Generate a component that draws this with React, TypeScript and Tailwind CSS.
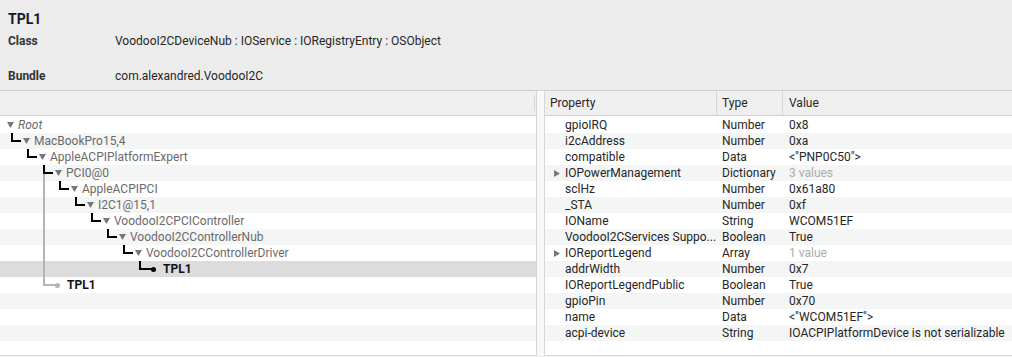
import React from "react";

type TreeRow = {
  label: string;
  depth: number;
  leaf?: boolean;
  italic?: boolean;
  bold?: boolean;
  selected?: boolean;
  guide?: boolean;
  guideBelow?: boolean;
  grayLink?: boolean;
};

const tree: TreeRow[] = [
  { label: "Root", depth: 0, italic: true },
  { label: "MacBookPro15,4", depth: 1 },
  { label: "AppleACPIPlatformExpert", depth: 2 },
  { label: "PCI0@0", depth: 3, guideBelow: true },
  { label: "AppleACPIPCI", depth: 4, guide: true },
  { label: "I2C1@15,1", depth: 5, guide: true },
  { label: "VoodooI2CPCIController", depth: 6, guide: true },
  { label: "VoodooI2CControllerNub", depth: 7, guide: true },
  { label: "VoodooI2CControllerDriver", depth: 8, guide: true },
  { label: "TPL1", depth: 9, leaf: true, bold: true, selected: true, guide: true },
  { label: "TPL1", depth: 3, leaf: true, bold: true, grayLink: true },
];

const props = [
  { name: "gpioIRQ", type: "Number", value: "0x8" },
  { name: "i2cAddress", type: "Number", value: "0xa" },
  { name: "compatible", type: "Data", value: '<"PNP0C50">' },
  { name: "IOPowerManagement", type: "Dictionary", value: "3 values", expand: true },
  { name: "sclHz", type: "Number", value: "0x61a80" },
  { name: "_STA", type: "Number", value: "0xf" },
  { name: "IOName", type: "String", value: "WCOM51EF" },
  { name: "VoodooI2CServices Suppo...", type: "Boolean", value: "True" },
  { name: "IOReportLegend", type: "Array", value: "1 value", expand: true },
  { name: "addrWidth", type: "Number", value: "0x7" },
  { name: "IOReportLegendPublic", type: "Boolean", value: "True" },
  { name: "gpioPin", type: "Number", value: "0x70" },
  { name: "name", type: "Data", value: '<"WCOM51EF">' },
  { name: "acpi-device", type: "String", value: "IOACPIPlatformDevice is not serializable" },
];

function DownTri() {
  return (
    <svg width="7" height="6" viewBox="0 0 7 6" className="shrink-0">
      <polygon points="0,0 7,0 3.5,6" fill="#777" />
    </svg>
  );
}

function RightTri() {
  return (
    <svg width="6" height="7" viewBox="0 0 6 7" className="shrink-0">
      <polygon points="0,0 6,3.5 0,7" fill="#777" />
    </svg>
  );
}

function TreeLine({ row, index }: { row: TreeRow; index: number }) {
  const bg = row.selected ? "bg-[#dcdcdc]" : index % 2 === 1 ? "bg-[#f4f5f5]" : "bg-white";
  const line = row.grayLink ? "border-[#b4b4b4]" : "border-black";
  return (
    <div className={`relative flex h-4 items-center ${bg}`}>
      {row.guide && <span className="absolute left-[43px] top-0 h-4 w-[2px] bg-[#b4b4b4]" />}
      {row.depth === 0 ? (
        <div className="ml-[7px] flex items-center">
          <DownTri />
        </div>
      ) : (
        <div className="flex h-4 items-start" style={{ paddingLeft: row.depth * 16 - 5 }}>
          <div className="flex h-4 flex-col">
            <div
              className={`h-[9px] border-b-2 border-l-2 ${line} ${row.leaf ? "w-[13px]" : "w-[10px]"}`}
            />
            {row.guideBelow && <div className="w-[2px] flex-1 bg-[#b4b4b4]" />}
          </div>
          {row.leaf ? (
            <span
              className={`mt-[6px] ml-[-1px] h-[5px] w-[5px] rounded-full ${row.grayLink ? "bg-[#b4b4b4]" : "bg-black"}`}
            />
          ) : (
            <div className="ml-[2px] flex h-4 items-center">
              <DownTri />
            </div>
          )}
        </div>
      )}
      <span
        className={`whitespace-nowrap ${row.leaf ? "ml-[7px]" : "ml-[4px]"} ${row.italic ? "italic" : ""} ${
          row.bold ? "font-bold text-[#111]" : "text-[#6a6a6a]"
        }`}
      >
        {row.label}
      </span>
    </div>
  );
}

export default function App() {
  const emptyTree = Array.from({ length: 5 }, (_, i) => tree.length + i);
  return (
    <div
      className="flex h-[357px] w-[1012px] flex-col overflow-hidden bg-[#ececec] text-[12px] leading-4 text-[#262626]"
      style={{ fontFamily: "Roboto, 'Liberation Sans', sans-serif" }}
    >
      {/* top info */}
      <div className="h-[91px] shrink-0 border-b border-[#cfcfcf] px-2">
        <div className="pt-[11px] text-[14px] font-bold leading-4 text-[#1a1a1a]">TPL1</div>
        <div className="mt-[6px] flex h-4 items-center">
          <span className="w-[107px] font-bold text-[#333]">Class</span>
          <span>VoodooI2CDeviceNub : IOService : IORegistryEntry : OSObject</span>
        </div>
        <div className="mt-[19px] flex h-4 items-center">
          <span className="w-[107px] font-bold text-[#333]">Bundle</span>
          <span>com.alexandred.VoodooI2C</span>
        </div>
      </div>

      {/* panes */}
      <div className="flex min-h-0 flex-1">
        {/* tree pane */}
        <div className="flex w-[537px] shrink-0 flex-col border-r border-[#d6d6d6] bg-white">
          <div className="flex h-[25px] shrink-0 justify-end border-b border-[#d0d0d0] bg-[#efefef]">
            <span className="my-[4px] mr-[1px] w-px bg-[#d4d4d4]" />
          </div>
          <div className="min-h-0 flex-1 overflow-hidden border-b border-[#dcdcdc] pt-px">
            {tree.map((row, i) => (
              <TreeLine key={i} row={row} index={i} />
            ))}
            {emptyTree.map((i) => (
              <div key={i} className={`h-4 ${i % 2 === 1 ? "bg-[#f4f5f5]" : "bg-white"}`} />
            ))}
          </div>
        </div>

        {/* splitter */}
        <div className="w-[8px] shrink-0 border-r border-[#d6d6d6] bg-[#f8f8f8]" />

        {/* property pane */}
        <div className="flex min-w-0 flex-1 flex-col bg-white">
          <div className="flex h-[25px] shrink-0 items-center border-b border-[#d0d0d0] bg-[#efefef]">
            <div className="flex h-full w-[172px] items-center border-r border-[#d4d4d4] pl-[5px]">Property</div>
            <div className="flex h-full w-[66px] items-center border-r border-[#d4d4d4] pl-[5px]">Type</div>
            <div className="pl-[6px]">Value</div>
          </div>
          <div className="min-h-0 flex-1 overflow-hidden border-b border-[#dcdcdc] pt-px">
            {props.map((p, i) => (
              <div key={i} className={`flex h-4 items-center ${i % 2 === 1 ? "bg-[#f4f5f5]" : "bg-white"}`}>
                <div className="flex w-[172px] items-center">
                  <span className="flex w-[20px] justify-end pr-[5px]">{p.expand && <RightTri />}</span>
                  <span className="whitespace-nowrap">{p.name}</span>
                </div>
                <div className="w-[66px] pl-[5px]">{p.type}</div>
                <div className={`whitespace-nowrap pl-[6px] ${p.expand ? "text-[#ababab]" : ""}`}>{p.value}</div>
              </div>
            ))}
            <div className="h-4 bg-white" />
          </div>
        </div>
      </div>
      <div className="h-px shrink-0" />
    </div>
  );
}
